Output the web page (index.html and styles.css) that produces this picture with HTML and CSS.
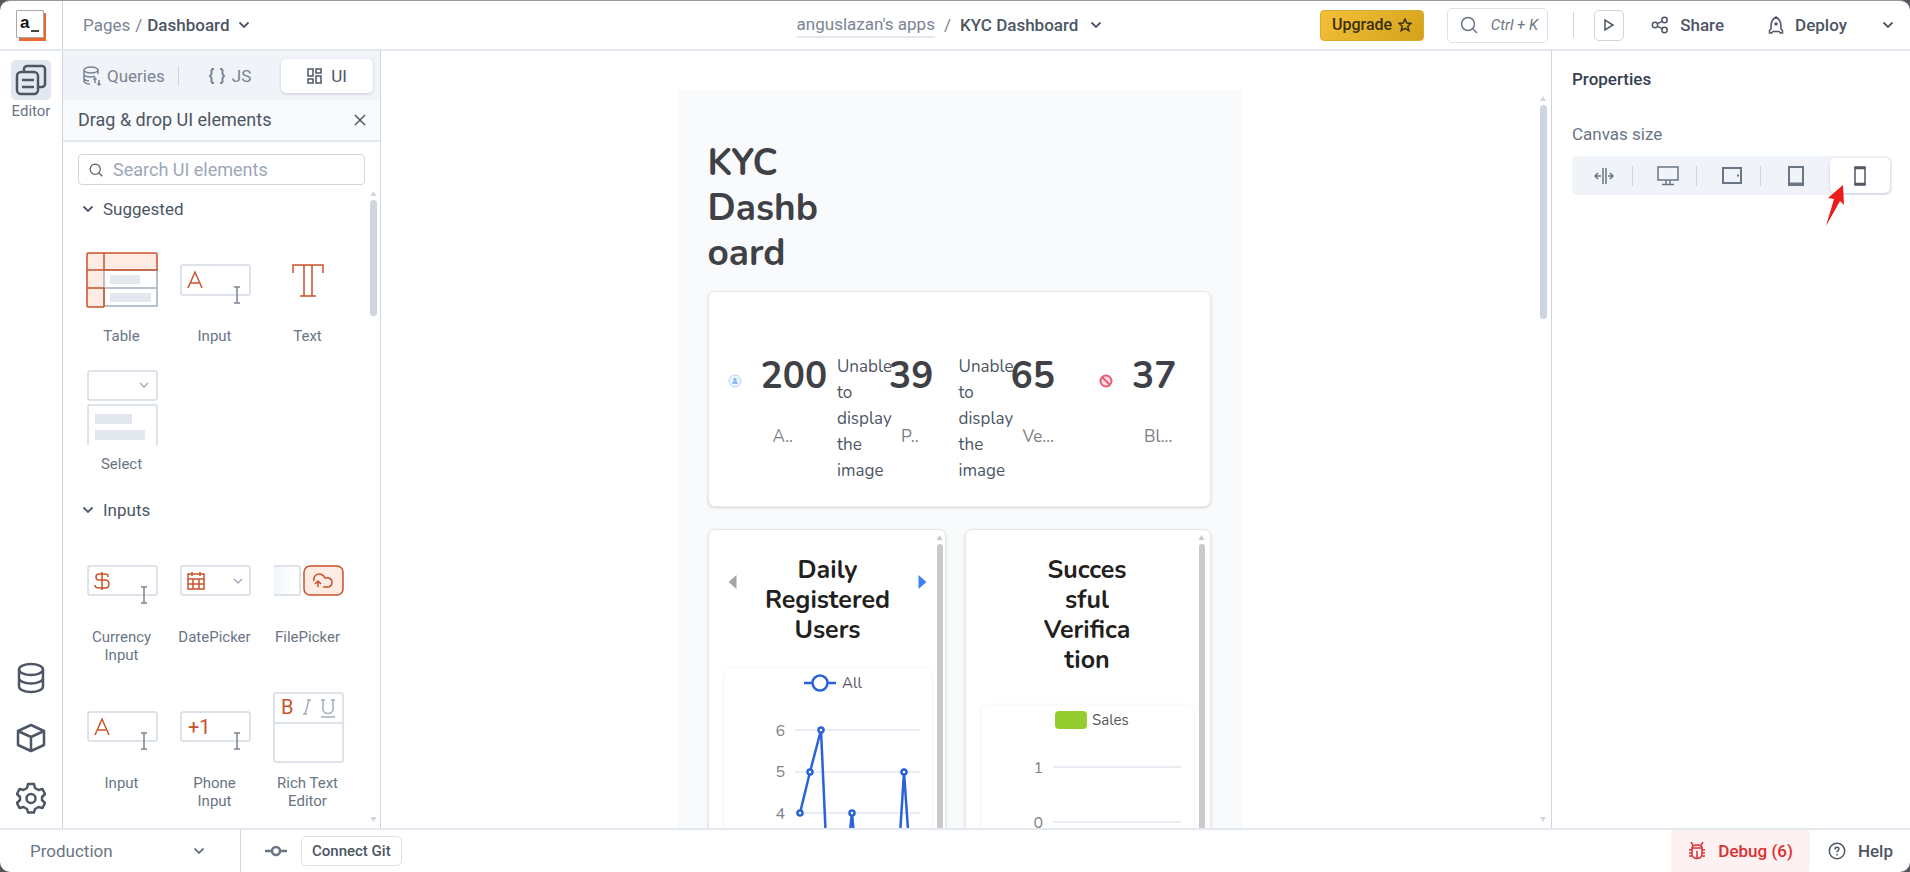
FILE: index.html
```html
<!DOCTYPE html>
<html lang="en">
<head>
    <meta charset="UTF-8" />
    <meta name="viewport" content="width=device-width, initial-scale=1.0"/>
    <title>KYC Dashboard | Editor</title>
    <link rel="stylesheet" href="styles.css">
</head>
<body>

    <!-- shared shapes -->
    <svg class="sprite" aria-hidden="true">
        <symbol id="chevron" viewBox="0 0 12 12"><path d="M1.5 3.5 6 8l4.500-4.500"/></symbol>
        <symbol id="search" viewBox="0 0 18 18"><circle cx="8" cy="8" r="6.500"/><path d="m13 13 4 4"/></symbol>
        <symbol id="cursor" viewBox="0 0 8 18"><path d="M1 1h6M1 17h6M4 1v16"/></symbol>
    </svg>

    <div class="app">
        <header class="header">
            <a class="logo" href="#" aria-label="Home">
                <svg width="30" height="31" viewBox="0 0 30 31">
                    <path fill="#e8682f" d="M3 3h27v28H3z"/>
                    <path fill="#fff" stroke="#a9a9ac" d="M.5.5h27v27H.5z"/>
                    <text x="4" y="18" font-family="Liberation Sans" font-weight="700" font-size="17" fill="#111">a</text>
                    <path fill="#444" d="M15 20h8v2h-8z"/>
                </svg>
            </a>
            <nav class="crumbs">
                <a href="#">Pages</a>
                <span>/</span>
                <button class="crumb-btn">Dashboard <svg class="icon chev"><use href="#chevron"/></svg></button>
            </nav>
            <div class="app-name">
                <a href="#">anguslazan's apps</a>
                <span>/</span>
                <button class="crumb-btn">KYC Dashboard <svg class="icon chev"><use href="#chevron"/></svg></button>
            </div>
            <div class="actions">
                <button class="upgrade">Upgrade
                    <svg class="icon" width="14" height="14" viewBox="0 0 14 14"><path d="m7 1 1.800 4 4.200.4-3.200 2.900 1 4.300L7 10.300l-3.800 2.300 1-4.300L1 5.400 5.200 5z"/></svg>
                </button>
                <button class="omnibar"><svg class="icon" width="18" height="18"><use href="#search"/></svg><em>Ctrl + K</em></button>
                <span class="divider"></span>
                <button class="play" aria-label="Preview"><svg class="icon" width="12" height="14" viewBox="0 0 12 14"><path d="M2 2v10l8-5z"/></svg></button>
                <button class="plain share">
                    <svg class="icon" width="18" height="18" viewBox="0 0 18 18"><circle cx="4" cy="9" r="2.700"/><circle cx="13.500" cy="4" r="2.700"/><circle cx="13.500" cy="14" r="2.700"/><path d="m6.500 7.700 4.500-2.400M6.500 10.300l4.500 2.400"/></svg>
                    Share
                </button>
                <button class="plain deploy">
                    <svg class="icon" width="16" height="18" viewBox="0 0 16 18"><path d="M8 1C4.500 3 3 6 3 10v3l-1.500 1.500V17h2L5 15.500h6l1.500 1.500h2v-2.500L13 13v-3c0-4-1.500-7-5-9z"/><circle cx="8" cy="8" r="1"/></svg>
                    Deploy
                </button>
                <button class="plain more" aria-label="More"><svg class="icon chev"><use href="#chevron"/></svg></button>
            </div>
        </header>

        <main class="main">
            <nav class="rail">
                <a class="rail-editor" href="#">
                    <span class="rail-box">
                        <svg class="icon bold" width="32" height="32" viewBox="0 0 32 32"><rect x="2" y="8" width="21" height="22" rx="4"/><path d="M9 8V5a3 3 0 0 1 3-3h15a3 3 0 0 1 3 3v15a3 3 0 0 1-3 3h-4M7 16h12M7 23h12"/></svg>
                    </span>
                    Editor
                </a>
                <div class="rail-bottom">
                    <a href="#" aria-label="Datasources"><svg class="icon bold" width="30" height="32" viewBox="0 0 30 32"><ellipse cx="15" cy="7.500" rx="12" ry="5.500"/><path d="M3 7.500v17C3 27.500 8.400 30 15 30s12-2.500 12-5.500v-17M3 16c0 3 5.400 5.500 12 5.500S27 19 27 16"/></svg></a>
                    <a href="#" aria-label="Libraries"><svg class="icon bold" width="30" height="32" viewBox="0 0 30 32"><path d="m15 3 13 6v14l-13 6-13-6V9zM2 9l13 6 13-6M15 15v14"/></svg></a>
                    <a href="#" aria-label="Settings"><svg class="icon bold" width="30" height="32" viewBox="0 0 30 32"><path d="M12 2h6l1 4 3.500 2L26.500 7l2.500 5-3 3v3l3 3-2.500 5-4-1-3.500 2-1 3.500h-6L11 27l-3.500-2-4 1L1 21l3-3v-3l-3-3 2.500-5 4 1L11 6z"/><circle cx="15" cy="16.500" r="4.500"/></svg></a>
                </div>
            </nav>

            <section class="explorer">
                <div class="tabs">
                    <button class="tab tab-queries">
                        <svg class="icon" width="18" height="20" viewBox="0 0 18 20"><ellipse cx="8" cy="4" rx="7" ry="3"/><path d="M1 4v11c0 1.500 2.500 3 6 3M15 4v4M1 8c0 2 3 3 7 3 2 0 3-.3 4-.8M1 12c0 1.500 2 2.700 5 3M12 17v-5m-1.500 1.500L12 12l1.500 1.500M16 14v5m-1.500-1.500L16 19l1.500-1.500"/></svg>
                        Queries
                    </button>
                    <button class="tab tab-js">
                        <svg class="icon braces" width="18" height="18" viewBox="0 0 18 18"><path d="M6 2H5C3.500 2 3.500 3 3.500 4v3L2 9l1.500 2v3c0 1 0 2 1.500 2h1M12 2h1c1.500 0 1.500 1 1.500 2v3L16 9l-1.500 2v3c0 1 0 2-1.500 2h-1"/></svg>
                        JS
                    </button>
                    <button class="tab tab-active">
                        <svg class="icon" width="15" height="16" viewBox="0 0 15 16"><path d="M1 1h5v7H1zM9 1h5v4H9zM1 11h5v4H1zM9 8h5v7H9z"/></svg>
                        UI
                    </button>
                </div>
                <div class="explorer-title">
                    <h2>Drag &amp; drop UI elements</h2>
                    <button aria-label="Close"><svg class="icon" width="12" height="12" viewBox="0 0 12 12"><path d="m1 1 10 10M11 1 1 11"/></svg></button>
                </div>
                <div class="search-box">
                    <svg class="icon" width="14" height="14"><use href="#search"/></svg>
                    <input type="text" placeholder="Search UI elements" aria-label="Search UI elements">
                </div>

                <div class="widget-scroll">
                    <div class="widget-list">
                        <h3><svg class="icon chev"><use href="#chevron"/></svg>Suggested</h3>
                        <div class="widgets">
                            <div class="widget">
                                <svg width="76" height="76" viewBox="0 0 76 76">
                                    <path class="tint" d="M3 11h70v17H20v37H3z"/>
                                    <path class="steel" d="M20 28h53v36H20zM20 46h53"/>
                                    <path class="rust" d="M20 65H4a1 1 0 0 1-1-1V12a1 1 0 0 1 1-1h68a1 1 0 0 1 1 1v16H3M20 11v17M3 46h17M20 65V46"/>
                                    <path class="skeleton" d="M26 33h30v9H26zM26 51h41v9H26z"/>
                                </svg>
                                <span>Table</span>
                            </div>
                            <div class="widget">
                                <svg width="76" height="76" viewBox="0 0 76 76"><rect class="frame" x="4" y="23" width="69" height="30" rx="2"/><path class="rust" d="m11 46 7-16 7 16M14 41h8"/><use class="caret" href="#cursor" x="56" y="44" width="8" height="18"/></svg>
                                <span>Input</span>
                            </div>
                            <div class="widget">
                                <svg width="76" height="76" viewBox="0 0 76 76"><path class="rust" d="M23 31v-8h30v8M34 23v31M42 23v31M30 54h16"/></svg>
                                <span>Text</span>
                            </div>
                            <div class="widget">
                                <svg width="76" height="76" viewBox="0 0 76 76"><rect class="frame" x="4" y="1" width="69" height="29" rx="2"/><path class="frame" d="M4 75V36a1 1 0 0 1 1-1h67a1 1 0 0 1 1 1v39"/><path class="steel" d="m56 13 4 4 4-4"/><path class="skeleton" d="M11 44h37v10H11zM11 60h50v10H11z"/></svg>
                                <span>Select</span>
                            </div>
                        </div>

                        <h3><svg class="icon chev"><use href="#chevron"/></svg>Inputs</h3>
                        <div class="widgets">
                            <div class="widget">
                                <svg width="76" height="76" viewBox="0 0 76 76"><rect class="frame" x="4" y="23" width="69" height="29" rx="2"/><path class="rust" d="M24 34v-1c0-1-1-2-3-2h-6c-2 0-3 1-3 3s1 3 3 3h6c3 0 4 1 4 4s-1 4-4 4h-6c-2 0-4-1-4-3M18 29v18"/><use class="caret" href="#cursor" x="56" y="43" width="8" height="18"/></svg>
                                <span>Currency Input</span>
                            </div>
                            <div class="widget">
                                <svg width="76" height="76" viewBox="0 0 76 76"><rect class="frame" x="4" y="23" width="69" height="29" rx="2"/><path class="rust" d="M11 31h16v15H11zM11 36h16M11 41h16M16 36v10M22 36v10M15 29v4M23 29v4"/><path class="steel" d="m57 36 4 4 4-4"/></svg>
                                <span>DatePicker</span>
                            </div>
                            <div class="widget">
                                <svg width="76" height="76" viewBox="0 0 76 76">
                                    <defs><linearGradient id="fade"><stop stop-color="#f1f5f9"/><stop offset="1" stop-color="#fff"/></linearGradient></defs>
                                    <path fill="url(#fade)" d="M4 23h18v29H4z"/><path class="frame" d="M4 23h24a2 2 0 0 1 2 2v25a2 2 0 0 1-2 2H4"/>
                                    <rect class="rust tint" x="34" y="23" width="39" height="29" rx="6"/>
                                    <path class="rust" d="M44 38c-1-3 1-7 5-7 3 0 5 2 6 4 4-1 7 1 7 4s-2 5-5 5h-4M48 44v-6m-3 3 3-3 3 3"/>
                                </svg>
                                <span>FilePicker</span>
                            </div>
                            <div class="widget">
                                <svg width="76" height="76" viewBox="0 0 76 76"><rect class="frame" x="4" y="23" width="69" height="29" rx="2"/><path class="rust" d="m11 46 7-16 7 16M14 41h8"/><use class="caret" href="#cursor" x="56" y="43" width="8" height="18"/></svg>
                                <span>Input</span>
                            </div>
                            <div class="widget">
                                <svg width="76" height="76" viewBox="0 0 76 76"><rect class="frame" x="4" y="23" width="69" height="29" rx="2"/><text class="glyph" x="11" y="45">+1</text><use class="caret" href="#cursor" x="56" y="43" width="8" height="18"/></svg>
                                <span>Phone Input</span>
                            </div>
                            <div class="widget">
                                <svg width="76" height="76" viewBox="0 0 76 76"><rect class="frame" x="4" y="4" width="69" height="69" rx="2"/><path class="frame" d="M4 34h69"/><text class="glyph" x="11" y="25">B</text><path class="steel" d="m35 25 4-14M33 25h4M37 11h4M53 11v9c0 6 10 6 10 0v-9M51 11h4M61 11h4M51 28h14"/></svg>
                                <span>Rich Text Editor</span>
                            </div>
                        </div>
                    </div>
                    <div class="scrollbar"><i class="arrow-up"></i><i class="thumb thumb-list"></i><i class="arrow-down"></i></div>
                </div>
            </section>

            <section class="canvas">
                <div class="artboard">
                    <h1>KYC<br>Dashb<br>oard</h1>

                    <div class="card stats">
                        <div class="stat">
                            <div class="stat-img"><svg width="14" height="14" viewBox="0 0 14 14"><circle cx="7" cy="7" r="6" fill="#eff6ff" stroke="#b4d3fb"/><circle cx="7" cy="5.500" r="1.800" fill="#8bb9f8"/><path fill="#8bb9f8" d="M4 10c0-4 6-4 6 0z"/></svg></div>
                            <div class="stat-info"><strong>200</strong><span>A..</span></div>
                        </div>
                        <div class="stat">
                            <div class="stat-img missing">Unable to display the image</div>
                            <div class="stat-info"><strong>39</strong><span>P..</span></div>
                        </div>
                        <div class="stat">
                            <div class="stat-img missing">Unable to display the image</div>
                            <div class="stat-info"><strong>65</strong><span>Ve...</span></div>
                        </div>
                        <div class="stat">
                            <div class="stat-img"><svg width="14" height="14" viewBox="0 0 14 14" fill="#fee2e7" stroke="#ee5a75" stroke-width="2"><circle cx="7" cy="7" r="5.500"/><path d="m3 3 8 8"/></svg></div>
                            <div class="stat-info"><strong>37</strong><span>Bl...</span></div>
                        </div>
                    </div>

                    <div class="charts">
                        <div class="card chart-card">
                            <div class="chart-body">
                                <div class="chart-head">
                                    <button class="page-prev" aria-label="Previous"></button>
                                    <h2>Daily<br>Registered<br>Users</h2>
                                    <button class="page-next" aria-label="Next"></button>
                                </div>
                                <div class="plot">
                                    <svg width="206" height="260" viewBox="0 0 206 260">
                                        <g class="line"><path d="M79 15h32"/><circle cx="95" cy="15" r="7.500"/></g>
                                        <text class="legend" x="117" y="20">All</text>
                                        <path class="grid" d="M70 62h125M70 104h125M70 145h125M70 187h125"/>
                                        <g class="tick"><text x="60" y="68">6</text><text x="60" y="109">5</text><text x="60" y="151">4</text></g>
                                        <g class="line">
                                            <path d="m75 145 10-41 11-42 9 200h9l13-117 10 117h32l10-158 11 158"/>
                                            <circle cx="75" cy="145" r="2.500"/><circle cx="85" cy="104" r="2.500"/><circle cx="96" cy="62" r="2.500"/><circle cx="127" cy="145" r="2.500"/><circle cx="179" cy="104" r="2.500"/>
                                        </g>
                                    </svg>
                                </div>
                            </div>
                            <div class="scrollbar grey"><i class="arrow-up"></i><i class="thumb"></i></div>
                        </div>
                        <div class="card chart-card">
                            <div class="chart-body">
                                <div class="chart-head single"><h2>Succes<br>sful<br>Verifica<br>tion</h2></div>
                                <div class="plot">
                                    <svg width="206" height="220" viewBox="0 0 206 220">
                                        <rect x="73" y="6" width="32" height="18" rx="4" fill="#93cd30"/>
                                        <text class="legend" x="110" y="20">Sales</text>
                                        <path class="grid" d="M71 62h128M71 117h128"/>
                                        <g class="tick"><text x="61" y="68">1</text><text x="61" y="123">0</text></g>
                                    </svg>
                                </div>
                            </div>
                            <div class="scrollbar grey"><i class="arrow-up"></i><i class="thumb"></i></div>
                        </div>
                    </div>
                </div>
                <div class="scrollbar"><i class="arrow-up"></i><i class="thumb thumb-canvas"></i><i class="arrow-down"></i></div>
            </section>

            <aside class="props">
                <h2>Properties</h2>
                <p>Canvas size</p>
                <div class="sizes">
                    <button aria-label="Fluid"><svg class="icon" width="20" height="20" viewBox="0 0 20 20"><path d="M9 2v16M12 2v16M7 10H1m3-3-3 3 3 3M14 10h5m-3-3 3 3-3 3"/></svg></button>
                    <button aria-label="Desktop"><svg class="icon" width="22" height="20" viewBox="0 0 22 20"><path d="M1 1h20v13H1zM9 14v4M13 14v4M5 18.500h12"/></svg></button>
                    <button aria-label="Tablet landscape"><svg class="icon mid" width="22" height="18" viewBox="0 0 22 18"><path d="M2 1h18v15H2z"/><path d="M16 8.500h2"/></svg></button>
                    <button aria-label="Tablet"><svg class="icon mid" width="16" height="20" viewBox="0 0 16 20"><path d="M1 1h14v18H1zM1 17.500h14"/></svg></button>
                    <button class="selected" aria-label="Mobile"><svg class="icon" width="14" height="20" viewBox="0 0 14 20"><path d="M2 1h10v18H2zM2 2.500h10M2 17.500h10"/></svg>
                        <svg class="pointer" width="20" height="42" viewBox="0 0 20 42"><path fill="#ea1b1b" d="M18 0 3 13l6 1L1 41l14-25 4 4z"/></svg>
                    </button>
                </div>
            </aside>
        </main>

        <footer class="footer">
            <button class="env">Production <svg class="icon chev"><use href="#chevron"/></svg></button>
            <svg class="icon bold commit" width="22" height="12" viewBox="0 0 22 12"><circle cx="11" cy="6" r="4"/><path d="M0 6h7M15 6h7"/></svg>
            <button class="git">Connect Git</button>
            <button class="debug">
                <svg class="icon" width="18" height="18" viewBox="0 0 18 18"><path d="M4 6h10v6c0 6-10 6-10 0zM9 9v7M4 6c0-4 10-4 10 0M5 3 3 0M13 3l2-3M4 8H1M4 11H1M4 14H1M14 8h3M14 11h3M14 14h3"/></svg>
                Debug (6)
            </button>
            <button class="help">
                <svg class="icon" width="18" height="18" viewBox="0 0 18 18"><circle cx="9" cy="9" r="7.700"/><path d="M7 7.500C7 4.500 11 4.700 11 7c0 1.600-2 1.500-2 3.300M9 12v1.500"/></svg>
                Help
            </button>
        </footer>
    </div>

</body>
</html>
```
FILE: styles.css
```css
* {
    box-sizing: border-box;
    margin: 0;
    padding: 0;
}

html {
    background: #55555a;
}

body {
    font-family: Roboto, 'Liberation Sans', sans-serif;
    font-size: 17px;
    line-height: 24px;
    color: #4c5664;
}

button {
    font: inherit;
    color: inherit;
    background: none;
    border: none;
    cursor: pointer;
    display: flex;
    align-items: center;
}

a {
    color: inherit;
    text-decoration: none;
}

.sprite {
    display: none;
}

.icon {
    flex: none;
    fill: none;
    stroke: currentColor;
    stroke-width: 1.5;
}

.icon.mid, .icon.braces {
    stroke-width: 2;
}

.icon.bold {
    stroke-width: 2.5;
    stroke-linejoin: round;
}

.chev {
    width: 12px;
    height: 12px;
    stroke-width: 1.8;
}

.app {
    height: 100vh;
    display: flex;
    flex-direction: column;
    background: #fff;
    border-top: 1px solid #97979c;
    border-radius: 10px;
    overflow: hidden;
}

/* header */
.header {
    flex: none;
    height: 50px;
    display: grid;
    grid-template-columns: 63px 1fr auto 1fr;
    align-items: center;
    border-bottom: 2px solid #e3e8ef;
}

.logo {
    height: 48px;
    display: flex;
    align-items: center;
    justify-content: center;
    border-right: 1px solid #cdd5df;
}

.crumbs, .app-name {
    display: flex;
    align-items: center;
    color: #7b8494;
}

.crumbs {
    gap: 5px;
    padding-left: 20px;
}

.crumb-btn {
    gap: 8px;
    font-weight: 500;
    color: #4c5664;
}

.app-name {
    gap: 9px;
    margin-right: 74px;
}

.app-name a {
    border-bottom: 2px solid #e3e8ef;
}

.app-name .crumb-btn {
    gap: 12px;
}

.actions {
    display: flex;
    align-items: center;
    justify-content: flex-end;
    padding-right: 16px;
    white-space: nowrap;
}

.upgrade {
    height: 31px;
    padding: 0 11px;
    gap: 6px;
    font-size: 16px;
    font-weight: 500;
    color: #3a2f0c;
    border: 1px solid #d9ad2c;
    border-radius: 4px;
    background: linear-gradient(135deg, #f4c03a, #d3a21a);
}

.omnibar {
    width: 101px;
    height: 35px;
    margin-left: 23px;
    padding: 0 9px 0 12px;
    justify-content: space-between;
    font-size: 15px;
    color: #6a7585;
    border: 1px solid #dbe1e9;
    border-radius: 5px;
}

.divider {
    height: 26px;
    margin: 0 20px 0 25px;
    border-left: 1px solid #cdd5df;
}

.play {
    width: 30px;
    height: 31px;
    justify-content: center;
    border: 1px solid #cdd5df;
    border-radius: 5px;
}

.plain {
    gap: 11px;
    font-weight: 500;
}

.share {
    margin-left: 27px;
}

.deploy {
    margin-left: 44px;
}

.more {
    margin-left: 35px;
}

/* layout */
.main {
    flex: 1;
    min-height: 0;
    display: grid;
    grid-template-columns: 63px 318px 1fr 359px;
    grid-template-rows: 100%;
}

.rail {
    display: flex;
    flex-direction: column;
    justify-content: space-between;
    align-items: center;
    padding: 9px 0 14px;
    border-right: 1px solid #cdd5df;
}

.rail-editor {
    display: flex;
    flex-direction: column;
    align-items: center;
    font-size: 15px;
    line-height: 22px;
    color: #6a7585;
}

.rail-box {
    width: 40px;
    height: 40px;
    display: flex;
    align-items: center;
    justify-content: center;
    color: #4c5664;
    background: #e3e8ef;
    border-radius: 5px;
}

.rail-bottom {
    display: flex;
    flex-direction: column;
    gap: 28px;
}

.rail-bottom a {
    height: 32px;
}

/* explorer */
.explorer {
    display: flex;
    flex-direction: column;
    border-right: 1px solid #cdd5df;
}

.tabs {
    height: 49px;
    display: flex;
    align-items: center;
    padding: 0 7px 0 20px;
    background: #f0f3f8;
    color: #7b8494;
}

.tab {
    height: 34px;
    gap: 6px;
}

.tab-queries {
    width: 95px;
}

.tab-js {
    flex: 1;
    justify-content: center;
    position: relative;
}

.tab-js::before {
    content: "";
    position: absolute;
    left: 0;
    height: 20px;
    border-left: 1px solid #cdd5df;
}

.tab-active {
    width: 92px;
    justify-content: center;
    gap: 9px;
    color: #4c5664;
    background: #fff;
    border-radius: 5px;
    box-shadow: 0 1px 3px rgba(30, 50, 80, 0.2);
}

.explorer-title {
    height: 42px;
    display: flex;
    align-items: center;
    justify-content: space-between;
    padding: 0 14px 0 15px;
    background: #f8fafc;
    border-bottom: 2px solid #e3e8ef;
}

.explorer-title h2 {
    font-size: 18px;
    font-weight: 400;
}

.search-box {
    height: 31px;
    margin: 12px 15px 0;
    padding-left: 10px;
    display: flex;
    align-items: center;
    gap: 10px;
    font-size: 18px;
    border: 1px solid #cdd5df;
    border-radius: 4px;
}

.search-box input {
    flex: 1;
    min-width: 0;
    font: inherit;
    border: none;
    outline: none;
    background: none;
}

.search-box input::placeholder {
    color: #9da7b6;
}

.widget-scroll {
    flex: 1;
    min-height: 0;
    display: flex;
    overflow: hidden;
}

.widget-list {
    flex: 1;
    padding: 12px 0 0 12px;
}

.widget-list h3 {
    display: flex;
    align-items: center;
    gap: 9px;
    padding-left: 7px;
    margin-bottom: 21px;
    font-size: 17px;
    font-weight: 400;
}

.widgets {
    display: grid;
    grid-template-columns: repeat(3, 93px);
}

.widget {
    display: flex;
    flex-direction: column;
    align-items: center;
    gap: 9px;
    padding: 0 8px 25px;
    font-size: 15px;
    line-height: 18px;
    text-align: center;
    color: #6a7585;
}

.frame, .steel, .rust, .caret {
    fill: none;
    stroke-width: 1.5;
}

.frame {
    stroke: #d3dae4;
}

.steel {
    stroke: #a3adbd;
}

.rust {
    stroke: #c8522a;
}

.tint {
    fill: #feece4;
}

.skeleton {
    fill: #e3e8ef;
}

.caret {
    stroke: #7b8494;
}

.glyph {
    font-size: 20px;
    fill: #c8522a;
}

/* scrollbars */
.scrollbar {
    flex: none;
    width: 10px;
    display: flex;
    flex-direction: column;
    align-items: center;
    gap: 4px;
    padding: 6px 3px 6px 0;
    color: #cdd5df;
}

.grey {
    width: 12px;
    color: #c9c9c9;
    padding: 5px 4px 0 0;
}

.arrow-up, .arrow-down {
    width: 6px;
    height: 5px;
    background: currentColor;
    clip-path: polygon(50% 0, 100% 100%, 0 100%);
}

.arrow-down {
    margin-top: auto;
    clip-path: polygon(0 0, 100% 0, 50% 100%);
}

.thumb {
    flex: 1;
    width: 7px;
    border-radius: 4px;
    background: currentColor;
}

.grey .thumb {
    width: 6px;
    border-radius: 3px 3px 0 0;
}

.thumb-list {
    flex: none;
    height: 116px;
}

.thumb-canvas {
    flex: none;
    height: 214px;
}

/* canvas */
.canvas {
    display: flex;
    justify-content: center;
    padding: 39px 0 0;
    overflow: hidden;
}

.canvas > .scrollbar {
    width: 13px;
}

.artboard {
    width: 564px;
    margin: 0 auto;
    padding: 51px 31px 0 30px;
    background: #f8fafc;
    font-family: Nunito, Lato, sans-serif;
}

.artboard h1 {
    font-size: 37px;
    line-height: 45px;
    color: #3f4147;
}

.card {
    background: #fff;
    border: 1px solid #e6e8ea;
    border-radius: 7px;
    box-shadow: 0 1px 3px rgba(0, 0, 0, 0.15);
}

.stats {
    height: 216px;
    margin-top: 15px;
    padding-top: 62px;
    display: grid;
    grid-template-columns: 129fr 122fr 122fr 130fr;
}

.stat {
    display: flex;
    min-width: 0;
}

.stat-img {
    flex: none;
    width: 52px;
    height: 54px;
    display: flex;
    align-items: center;
    justify-content: center;
}

.stat-img.missing {
    display: block;
    font-size: 17px;
    line-height: 26px;
}

.stat-info strong {
    display: block;
    font-size: 37px;
    line-height: 45px;
    color: #3f4147;
}

.stat-info span {
    display: block;
    margin: 25px 0 0 12px;
    font-size: 17px;
    line-height: 26px;
    color: #7c7e85;
}

.charts {
    display: grid;
    grid-template-columns: 238fr 246fr;
    gap: 19px;
    margin-top: 22px;
}

.chart-card {
    height: 400px;
    display: flex;
    overflow: hidden;
}

.chart-body {
    flex: 1;
    padding: 25px 4px 0 15px;
}

.chart-head {
    display: flex;
    justify-content: space-between;
    padding: 0 5px;
    margin-bottom: 22px;
}

.chart-head.single {
    justify-content: center;
    margin-bottom: 29px;
}

.chart-head h2 {
    font-size: 25px;
    line-height: 30px;
    text-align: center;
    color: #231f20;
}

.page-prev, .page-next {
    width: 8px;
    height: 14px;
    margin-top: 20px;
    background: #a5a5a5;
    clip-path: polygon(0 50%, 100% 0, 100% 100%);
}

.page-next {
    background: #3b82f6;
    clip-path: polygon(0 0, 100% 50%, 0 100%);
}

.plot {
    border: 1px solid #f9fafb;
    border-radius: 7px;
    box-shadow: 0 1px 3px rgba(0, 0, 0, 0.1);
}

.line {
    fill: #fff;
    stroke: #2962d9;
    stroke-width: 2.5;
}

.line path {
    fill: none;
}

.grid {
    fill: none;
    stroke: #e8edf4;
    stroke-width: 2;
}

.legend {
    font-size: 15px;
    fill: #55575c;
}

.tick {
    font-size: 16px;
    text-anchor: end;
    fill: #808287;
}

/* properties */
.props {
    padding: 16px 18px 0 20px;
    border-left: 1px solid #cdd5df;
}

.props h2 {
    font-size: 17px;
    font-weight: 500;
    color: #364152;
}

.props p {
    margin: 31px 0 10px;
    color: #6a7585;
}

.sizes {
    height: 39px;
    display: grid;
    grid-template-columns: repeat(5, 1fr);
    align-items: center;
    border-radius: 5px;
    background: #f0f3f8;
    color: #6a7585;
}

.sizes button {
    height: 20px;
    justify-content: center;
    position: relative;
}

.sizes button:nth-child(-n+3)::after {
    content: "";
    position: absolute;
    right: 3px;
    height: 20px;
    border-left: 1px solid #cdd5df;
}

.sizes .selected {
    height: 35px;
    margin: 0 2px;
    border-radius: 5px;
    background: #fff;
    color: #4c5664;
    box-shadow: 0 1px 3px rgba(30, 50, 80, 0.2);
}

.pointer {
    position: absolute;
    left: -5px;
    top: 27px;
}

/* footer */
.footer {
    flex: none;
    height: 44px;
    display: flex;
    align-items: center;
    border-top: 2px solid #e3e8ef;
}

.env {
    width: 241px;
    height: 42px;
    padding: 0 35px 0 30px;
    justify-content: space-between;
    color: #6a7585;
    border-right: 1px solid #cdd5df;
}

.commit {
    margin: 0 14px 0 24px;
    color: #6a7585;
}

.git {
    height: 30px;
    padding: 0 10px;
    font-size: 15px;
    font-weight: 500;
    border: 1px solid #dbe1e9;
    border-radius: 5px;
}

.debug {
    height: 42px;
    margin-left: auto;
    padding: 0 17px;
    gap: 12px;
    font-weight: 500;
    color: #dc2f2f;
    background: #fef1f1;
    border-radius: 4px;
}

.help {
    padding: 0 17px 0 18px;
    gap: 12px;
    font-weight: 500;
}
```
